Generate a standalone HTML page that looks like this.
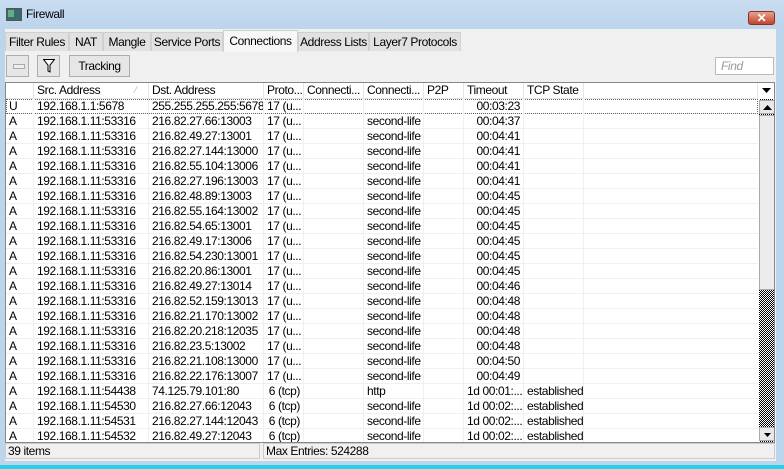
<!DOCTYPE html>
<html><head><style>
body{margin:0;width:784px;height:469px;overflow:hidden;background:#bcd4ec;font-family:"Liberation Sans",sans-serif;font-size:11px;letter-spacing:-0.4px;color:#000;position:relative}
.a{position:absolute}
.tb{position:absolute;top:0;left:0;width:784px;height:30px;background:linear-gradient(#c9dcf0,#bcd4ec)}
.panel{position:absolute;left:5px;top:29px;width:771px;height:432px;background:#f0f0f0}
.tab{position:absolute;top:32px;height:19px;line-height:19px;background:#e1e1e1;border:1px solid #d0d0d0;border-bottom:none;text-align:center;box-sizing:border-box;white-space:nowrap;font-size:12px}
.btn{position:absolute;top:55px;height:22px;border:1px solid #adadad;background:#e6e6e6;box-sizing:border-box;text-align:center;line-height:20px;font-size:12px}
.grid{position:absolute;left:5px;top:82px;width:770px;height:361px;background:#fff;border:1px solid #828790;box-sizing:border-box;overflow:hidden}
.hdr{position:absolute;top:0;height:16px;background:#fff;border-right:1px solid #e5e5e5;border-bottom:1px solid #e5e5e5;box-sizing:border-box;line-height:15px;padding-left:3px;white-space:nowrap;overflow:hidden;font-size:12px}
.row{position:absolute;left:0;width:752px;height:15px;border-bottom:1px solid #f0f0f0;box-sizing:border-box}
.c{position:absolute;top:0;height:15px;line-height:14px;border-right:1px solid #f0f0f0;box-sizing:border-box;padding-left:3px;white-space:nowrap;overflow:hidden;font-size:12px}
.r{text-align:right;padding-right:3px}
</style></head><body>
<div class="tb"></div>
<div class="a" style="left:6px;top:8px;width:14px;height:11px;background:#3a6a70;border:1px solid #555"></div>
<div class="a" style="left:8px;top:10px;width:6px;height:7px;background:#5fb08a"></div>
<div class="a" style="left:26px;top:7px;font-size:12px">Firewall</div>
<div class="a" style="left:748px;top:11px;width:27px;height:14px;border-radius:3px;background:linear-gradient(#e8a090,#c0452e);border:1px solid #8a3020;box-sizing:border-box;color:#fff;font-weight:bold;text-align:center;line-height:12px;font-size:12px">✕</div>
<div class="panel"></div>
<div class="tab" style="left:5px;width:64px">Filter Rules</div>
<div class="tab" style="left:69px;width:34px">NAT</div>
<div class="tab" style="left:103px;width:48px">Mangle</div>
<div class="tab" style="left:151px;width:72px">Service Ports</div>
<div class="tab" style="left:223px;top:30px;height:22px;line-height:20px;width:75px;background:#f7f7f7">Connections</div>
<div class="tab" style="left:298px;width:71px">Address Lists</div>
<div class="tab" style="left:369px;width:92px">Layer7 Protocols</div>
<div class="btn" style="left:6px;width:23px"><div class="a" style="left:6px;top:8px;width:10px;height:3px;border:1px solid #aaa;background:#eee"></div></div>
<div class="btn" style="left:37px;width:23px"><svg class="a" style="left:5px;top:3px" width="12" height="14"><path d="M0.5 0.5H11.5L7 6V13L5 12V6Z" fill="#fff" stroke="#000"/></svg></div>
<div class="btn" style="left:69px;width:61px">Tracking</div>
<div class="a" style="left:715px;top:57px;width:59px;height:18px;border:1px solid #bbb;background:#fff;box-sizing:border-box;color:#999;font-style:italic;padding-left:5px;line-height:16px;font-size:12px">Find</div>
<div class="grid" id="g">
<div class="hdr" style="left:0;width:28px"></div>
<div class="hdr" style="left:28px;width:115px">Src. Address<span style="position:absolute;left:101px;color:#aaa;font-size:9px">⁄</span></div>
<div class="hdr" style="left:143px;width:115px">Dst. Address</div>
<div class="hdr" style="left:258px;width:40px">Proto...</div>
<div class="hdr" style="left:298px;width:60px">Connecti...</div>
<div class="hdr" style="left:358px;width:60px">Connecti...</div>
<div class="hdr" style="left:418px;width:40px">P2P</div>
<div class="hdr" style="left:458px;width:60px">Timeout</div>
<div class="hdr" style="left:518px;width:60px">TCP State</div>
<div class="hdr" style="left:578px;width:174px"></div>
<div class="hdr" style="left:752px;width:17px;border:none"><svg class="a" style="left:4px;top:5px" width="9" height="6"><path d="M0 0H9L4.5 5Z"/></svg></div>
<div id="rows"></div>
<div class="a" style="left:753px;top:16px;width:16px;height:343px;background:repeating-conic-gradient(#000 0 25%,#fff 0 50%) 0 0/2px 2px"></div>
<div class="a" style="left:753px;top:17px;width:16px;height:14px;background:#e8e8e8;border:1px solid #aaa;box-sizing:border-box"><svg class="a" style="left:3px;top:4px" width="9" height="5"><path d="M0 5H9L4.5 0Z"/></svg></div>
<div class="a" style="left:753px;top:32px;width:16px;height:175px;background:#ececec;border:1px solid #aaa;box-sizing:border-box"></div>
<div class="a" style="left:753px;top:344px;width:16px;height:14px;background:#e8e8e8;border:1px solid #aaa;box-sizing:border-box"><svg class="a" style="left:4px;top:5px" width="7" height="4"><path d="M0 0H7L3.5 4Z"/></svg></div>
</div>
<div class="a" style="left:5px;top:443px;width:255px;height:16px;border:1px solid #ccc;box-sizing:border-box;line-height:14px;padding-left:2px;font-size:12px">39 items</div>
<div class="a" style="left:263px;top:443px;width:512px;height:16px;border:1px solid #ccc;box-sizing:border-box;line-height:14px;padding-left:2px;font-size:12px">Max Entries: 524288</div>
<div class="a" style="left:0;top:465px;width:784px;height:4px;background:#2ad0e8"></div>
<script>
var d=[["U","192.168.1.1:5678","255.255.255.255:5678","17 (u...","","00:03:23",""],
["A","192.168.1.11:53316","216.82.27.66:13003","17 (u...","second-life","00:04:37",""],
["A","192.168.1.11:53316","216.82.49.27:13001","17 (u...","second-life","00:04:41",""],
["A","192.168.1.11:53316","216.82.27.144:13000","17 (u...","second-life","00:04:41",""],
["A","192.168.1.11:53316","216.82.55.104:13006","17 (u...","second-life","00:04:41",""],
["A","192.168.1.11:53316","216.82.27.196:13003","17 (u...","second-life","00:04:41",""],
["A","192.168.1.11:53316","216.82.48.89:13003","17 (u...","second-life","00:04:45",""],
["A","192.168.1.11:53316","216.82.55.164:13002","17 (u...","second-life","00:04:45",""],
["A","192.168.1.11:53316","216.82.54.65:13001","17 (u...","second-life","00:04:45",""],
["A","192.168.1.11:53316","216.82.49.17:13006","17 (u...","second-life","00:04:45",""],
["A","192.168.1.11:53316","216.82.54.230:13001","17 (u...","second-life","00:04:45",""],
["A","192.168.1.11:53316","216.82.20.86:13001","17 (u...","second-life","00:04:45",""],
["A","192.168.1.11:53316","216.82.49.27:13014","17 (u...","second-life","00:04:46",""],
["A","192.168.1.11:53316","216.82.52.159:13013","17 (u...","second-life","00:04:48",""],
["A","192.168.1.11:53316","216.82.21.170:13002","17 (u...","second-life","00:04:48",""],
["A","192.168.1.11:53316","216.82.20.218:12035","17 (u...","second-life","00:04:48",""],
["A","192.168.1.11:53316","216.82.23.5:13002","17 (u...","second-life","00:04:48",""],
["A","192.168.1.11:53316","216.82.21.108:13000","17 (u...","second-life","00:04:50",""],
["A","192.168.1.11:53316","216.82.22.176:13007","17 (u...","second-life","00:04:49",""],
["A","192.168.1.11:54438","74.125.79.101:80","6 (tcp)","http","1d 00:01:...","established"],
["A","192.168.1.11:54530","216.82.27.66:12043","6 (tcp)","second-life","1d 00:02:...","established"],
["A","192.168.1.11:54531","216.82.27.144:12043","6 (tcp)","second-life","1d 00:02:...","established"],
["A","192.168.1.11:54532","216.82.49.27:12043","6 (tcp)","second-life","1d 00:02:...","established"]];
var h="";
d.forEach(function(r,i){
var t=16+i*15;
h+='<div class="row" style="top:'+t+'px'+(i==0?';outline:1px dotted #666;outline-offset:-1px':'')+'">'+
'<div class="c" style="left:0;width:28px">'+r[0]+'</div>'+
'<div class="c" style="left:28px;width:115px">'+r[1]+'</div>'+
'<div class="c" style="left:143px;width:115px">'+r[2]+'</div>'+
'<div class="c r" style="left:258px;width:40px">'+r[3]+'</div>'+
'<div class="c" style="left:298px;width:60px"></div>'+
'<div class="c" style="left:358px;width:60px">'+r[4]+'</div>'+
'<div class="c" style="left:418px;width:40px"></div>'+
'<div class="c r" style="left:458px;width:60px">'+r[5]+'</div>'+
'<div class="c" style="left:518px;width:60px">'+r[6]+'</div></div>';});
document.getElementById("rows").innerHTML=h;
</script>
</body></html>
